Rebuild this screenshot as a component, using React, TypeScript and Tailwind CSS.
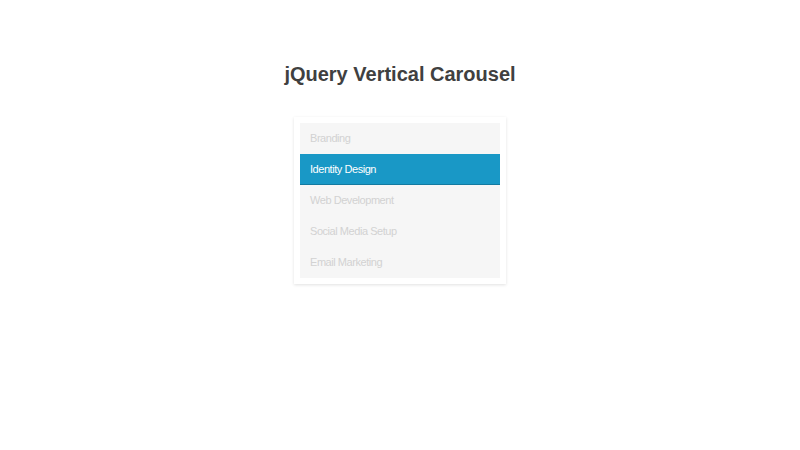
import { useState } from "react";

const ITEMS = [
  "Branding",
  "Identity Design",
  "Web Development",
  "Social Media Setup",
  "Email Marketing",
];

export default function App() {
  const [active, setActive] = useState(1);

  return (
    <div className="min-h-screen bg-white flex flex-col items-center font-['Liberation_Sans',Arial,sans-serif]">
      <h1 className="mt-[61px] text-[20px] leading-[26px] font-bold text-[#404040]">
        jQuery Vertical Carousel
      </h1>

      {/* Carousel box */}
      <div className="mt-[30px] bg-white p-[6px] shadow-[0_1px_3px_rgba(0,0,0,0.12)]">
        <ul className="w-[200px] bg-[#f6f6f6]">
          {ITEMS.map((item, i) => (
            <li
              key={item}
              onClick={() => setActive(i)}
              className={
                i === active
                  ? "h-[31px] flex items-center px-[10px] text-[11px] tracking-[-0.45px] cursor-pointer bg-[#1998c6] text-white border-b border-[#137aa0]"
                  : "h-[31px] flex items-center px-[10px] text-[11px] tracking-[-0.45px] cursor-pointer text-[#d2d2d2]"
              }
            >
              {item}
            </li>
          ))}
        </ul>
      </div>
    </div>
  );
}
